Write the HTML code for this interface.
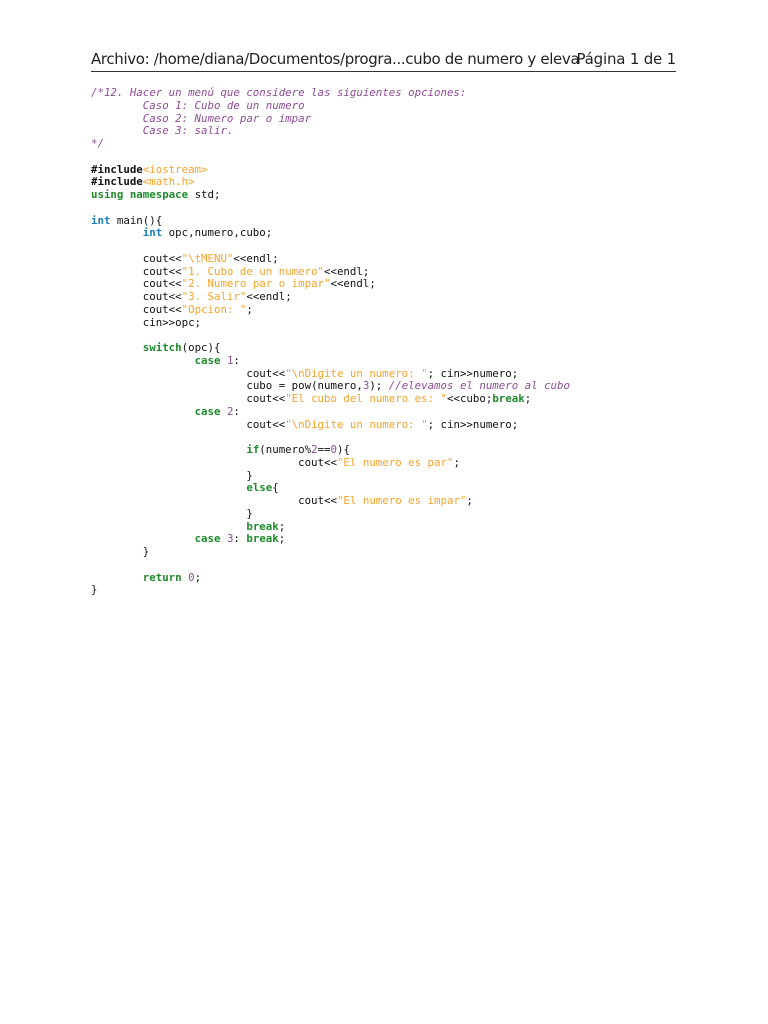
<!DOCTYPE html>
<html><head><meta charset="utf-8"><style>
body{margin:0;background:#fff;width:768px;height:1024px;position:relative;overflow:hidden}
.hd{position:absolute;left:91px;top:50px;font:15px "DejaVu Sans",sans-serif;color:#222;white-space:nowrap;letter-spacing:-0.35px}
.hr{position:absolute;right:92px;top:50px;font:15px "DejaVu Sans",sans-serif;color:#222;white-space:nowrap;letter-spacing:-0.2px}
.ln{position:absolute;left:91px;top:71px;width:585px;height:1px;background:#333}
pre{position:absolute;left:91px;top:87px;margin:0;font:10.75px/12.75px "DejaVu Sans Mono",monospace;color:#111;tab-size:8}
.c{color:#8d4a96;font-style:italic}
.s{color:#f5a32a}
.k{color:#1e8a2a;font-weight:bold}
.t{color:#1d7fb3;font-weight:bold}
.n{color:#8d4a96}
.p{font-weight:bold}
</style></head><body>
<div class="hd">Archivo: /home/diana/Documentos/progra...cubo de numero y eleva</div>
<div class="hr">Página 1 de 1</div>
<div class="ln"></div>
<pre><span class="c">/*12. Hacer un menú que considere las siguientes opciones:
	Caso 1: Cubo de un numero
	Caso 2: Numero par o impar
	Case 3: salir.
*/</span>

<span class="p">#include</span><span class="s">&lt;iostream&gt;</span>
<span class="p">#include</span><span class="s">&lt;math.h&gt;</span>
<span class="k">using namespace</span> std;

<span class="t">int</span> main(){
	<span class="t">int</span> opc,numero,cubo;

	cout&lt;&lt;<span class="s">"\tMENU"</span>&lt;&lt;endl;
	cout&lt;&lt;<span class="s">"1. Cubo de un numero"</span>&lt;&lt;endl;
	cout&lt;&lt;<span class="s">"2. Numero par o impar"</span>&lt;&lt;endl;
	cout&lt;&lt;<span class="s">"3. Salir"</span>&lt;&lt;endl;
	cout&lt;&lt;<span class="s">"Opcion: "</span>;
	cin&gt;&gt;opc;

	<span class="k">switch</span>(opc){
		<span class="k">case</span> <span class="n">1</span>:
			cout&lt;&lt;<span class="s">"\nDigite un numero: "</span>; cin&gt;&gt;numero;
			cubo = pow(numero,<span class="n">3</span>); <span class="c">//elevamos el numero al cubo</span>
			cout&lt;&lt;<span class="s">"El cubo del numero es: "</span>&lt;&lt;cubo;<span class="k">break</span>;
		<span class="k">case</span> <span class="n">2</span>:
			cout&lt;&lt;<span class="s">"\nDigite un numero: "</span>; cin&gt;&gt;numero;

			<span class="k">if</span>(numero%<span class="n">2</span>==<span class="n">0</span>){
				cout&lt;&lt;<span class="s">"El numero es par"</span>;
			}
			<span class="k">else</span>{
				cout&lt;&lt;<span class="s">"El numero es impar"</span>;
			}
			<span class="k">break</span>;
		<span class="k">case</span> <span class="n">3</span>: <span class="k">break</span>;
	}

	<span class="k">return</span> <span class="n">0</span>;
}</pre>
</body></html>
